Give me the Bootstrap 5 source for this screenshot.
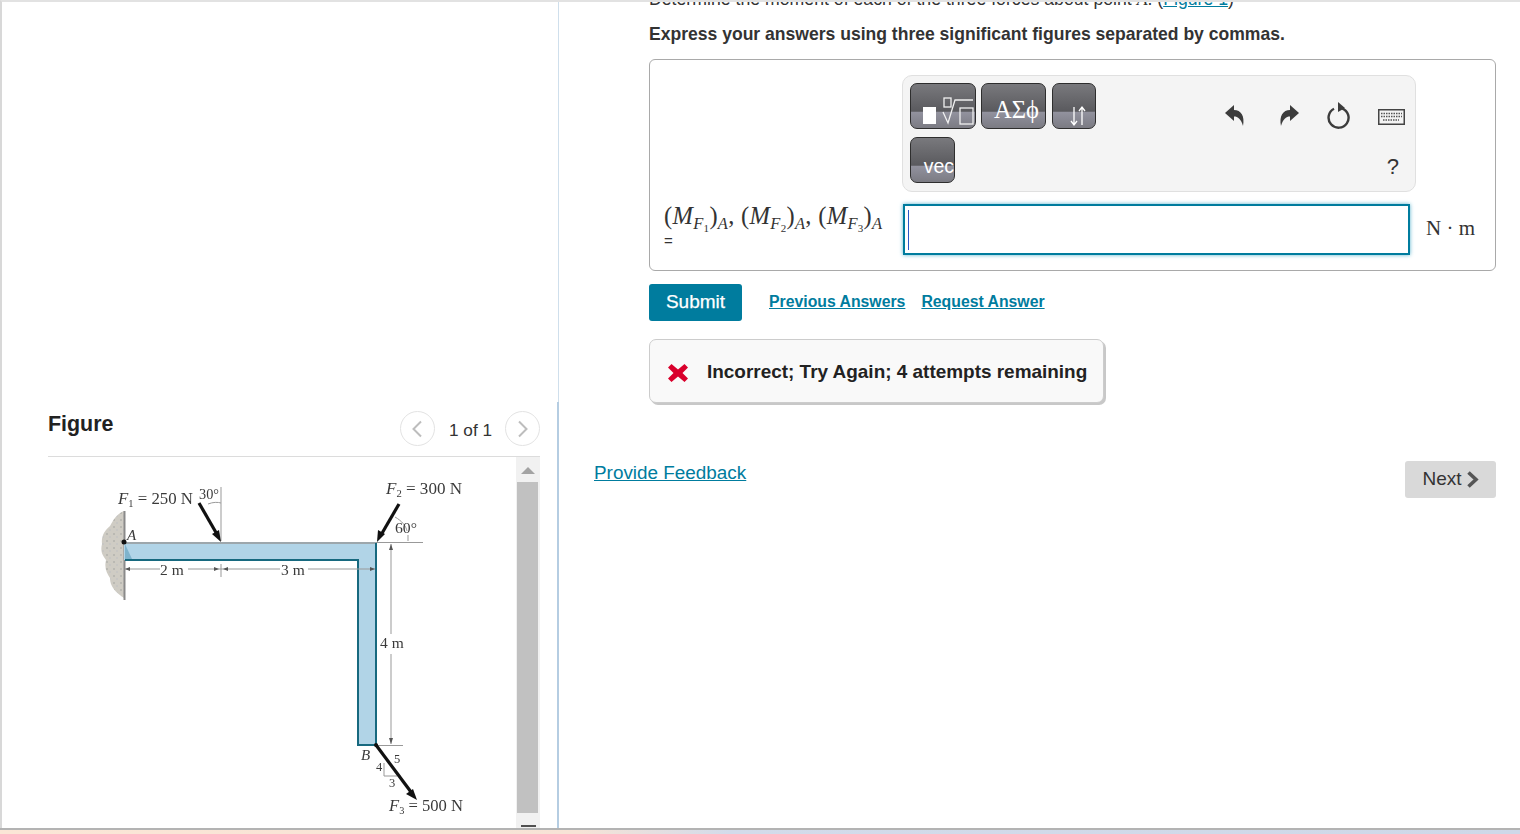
<!DOCTYPE html>
<html lang="en">
<head>
<meta charset="utf-8">
<title>Figure</title>
<link href="https://cdn.jsdelivr.net/npm/bootstrap@5.3.0/dist/css/bootstrap.min.css" rel="stylesheet">
<style>
html,body{height:834px;overflow:hidden;background:#fff}
body{font-family:"Liberation Sans",Arial,sans-serif;color:#333}
.shell{height:834px;display:flex;flex-direction:column}
.stage{flex:1 1 auto;min-height:0;display:flex;border-top:2px solid #e2e2e2;border-left:2px solid #d8d8d8;overflow:hidden}
.base-strip{flex:0 0 6px;border-top:2px solid #b3b3b3;background:linear-gradient(90deg,#fbe6d6 0,#f7e3d6 38%,#d3dbea 48%,#ced8e8 100%)}
.left-pane{flex:0 0 556px;display:flex;flex-direction:column;justify-content:flex-end;border-right:1px solid #cfdfec}
.fig-pane{height:426px;display:flex;flex-direction:column;padding-left:46px;border-right:2px solid #b5cde2;margin-right:-1px}
.fig-head{height:55px;flex:0 0 55px;margin-right:17px;border-bottom:1px solid #dcdcdc;display:flex;justify-content:space-between;align-items:flex-start}
.fig-title{font-size:21.4px;font-weight:700;color:#222;margin:9px 0 0;line-height:26px}
.pager{display:flex;align-items:center;gap:13px;margin-top:9px;font-size:17.2px;color:#333}
.pager span{padding:4px 0 0 1px}
.pager-dot{width:35px;height:35px;border:1px solid #e3e3e3;border-radius:50%;display:flex;align-items:center;justify-content:center;background:#fff;padding:0}
.fig-body{flex:1 1 auto;min-height:0;display:flex;margin-right:17px}
.fig-canvas{flex:0 0 468px;height:371px;overflow:hidden}
.fig-canvas svg{display:block;filter:blur(.45px)}
.fig-canvas text{font-family:"Liberation Serif",serif;fill:#3a3a3a}
.vbar{flex:0 0 24px;background:#f1f1f1;display:flex;flex-direction:column;align-items:flex-start;padding-left:1px;overflow:hidden}
.vbar-up{width:0;height:0;border-left:7px solid transparent;border-right:7px solid transparent;border-bottom:7px solid #a3a3a3;margin:10px 0 0 4px}
.vbar-thumb{width:21px;height:331px;background:#c1c1c1;margin-top:8px}
.vbar-down{width:15px;height:2px;background:#505050;margin:12px 0 0 4px}
.right-pane{flex:1 1 auto;min-width:0}
.q-block{padding:0 24px 0 90px}
.q-clip{font-size:17.7px;line-height:22px;margin:-14px 0 0;color:#333;white-space:nowrap}
.q-clip i{font-family:"Liberation Serif",serif}
.q-clip a,.act-link,.fb-link{color:#007c9e}
.q-bold{font-size:17.56px;font-weight:700;line-height:22px;margin:13px 0 0;color:#333;white-space:nowrap}
.ans-card{margin-top:14px;height:212px;border:1px solid #a9a9a9;border-radius:6px;padding:15px 0 0 252px;display:block;background:#fff}
.tool-box{width:514px;height:117px;background:#f4f4f4;border:1px solid #e0e0e0;border-radius:10px;display:flex;justify-content:space-between;padding:7px 10px 0 7px}
.tool-left{display:flex;flex-direction:column;gap:8px}
.tool-first{display:flex;gap:5px}
.tool-right{display:flex;flex-direction:column;align-items:flex-end}
.ico-row{display:flex;align-items:center;gap:28px;height:64px}
.ico-undo{margin-right:6px}
.ico-reset{margin-right:-1px}
.help-q{font-size:22px;line-height:26px;color:#333;margin:0 6px 0 0;padding-top:7px}
.mbtn{height:46px;border:1px solid #2e2e2e;border-radius:7px;padding:0;background:linear-gradient(180deg,#79797d 0,#5a5a5e 62%,#92929e 64%,#7b7b83 100%);color:#fff;display:flex;align-items:flex-end;justify-content:center;overflow:hidden}
.mb-a{width:66px}
.mb-b{width:65px;font-family:"Liberation Serif",serif;font-size:24.5px;line-height:35px;padding:0 0 1px 6px}
.mb-c{width:44px;margin-left:1px}
.mb-d{width:45px;font-family:"Liberation Sans",sans-serif;font-size:19.5px;line-height:32px;justify-content:flex-end}
.ans-row{display:flex;align-items:center;margin:11px 0 0 -238px}
.math-lab{flex:0 0 239px;font-family:"Liberation Serif",serif;font-size:24.5px;line-height:25px;color:#333;white-space:nowrap;padding-bottom:6px;letter-spacing:.3px}
.math-lab sub{font-size:16.5px;bottom:-.3em;line-height:0}
.math-lab sub sub{font-size:11px;font-style:normal}
.math-eq{display:block;font-family:"Liberation Sans",sans-serif;font-size:15px;line-height:16px;margin-top:5px}
.ans-input{width:507px;height:51px;border:2px solid #007c9e;box-shadow:0 0 4px #5ab3cd;background:#fff;padding:4px 0 0 3px}
.ans-input span{display:block;width:1px;height:40px;background:#2a56c6}
.unit-lab{font-family:"Liberation Serif",serif;font-size:21px;color:#333;margin-left:16px;white-space:nowrap}
.act-row{display:flex;align-items:center;margin-top:13px}
.btn-go{background:#007c9e;border:0;border-radius:3px;color:#fff;font-size:19px;width:93px;height:37px;padding:0;-webkit-text-stroke:.25px #fff}
.btn-go:hover{background:#007c9e;color:#fff}
.act-link{font-size:15.8px;font-weight:700;margin:0 0 2px 16px}
.act-first{margin-left:27px}
.msg-box{margin-top:18px;width:455px;height:64px;background:#f9f9f9;border:1px solid #ccc;border-radius:7px;box-shadow:2px 2px 0 #c8c8c8;display:flex;align-items:center;padding:3px 0 0 18px;gap:19px;font-size:18.95px;font-weight:700;color:#222;white-space:nowrap}
.fb-row{display:flex;justify-content:space-between;align-items:flex-start;padding:58px 24px 0 36px}
.fb-link{font-size:18.9px;line-height:24px;margin-left:-1px}
.btn-next{background:#d9d9d9;border:0;border-radius:3px;color:#333;font-size:19px;width:91px;height:37px;padding:0;display:flex;align-items:center;justify-content:center;gap:4px}
.btn-next:hover{background:#d9d9d9;color:#333}
</style>
</head>
<body>
<div class="shell">
  <div class="stage">
    <aside class="left-pane">
      <section class="fig-pane">
        <header class="fig-head">
          <h2 class="fig-title">Figure</h2>
          <div class="pager">
            <button class="pager-dot" type="button" aria-label="Previous"><svg width="12" height="18" viewBox="0 0 12 18"><path d="M10 1.500 2.500 9 10 16.500" fill="none" stroke="#bdbdbd" stroke-width="2"/></svg></button>
            <span>1 of 1</span>
            <button class="pager-dot" type="button" aria-label="Next"><svg width="12" height="18" viewBox="0 0 12 18"><path d="M2 1.500 9.500 9 2 16.500" fill="none" stroke="#bdbdbd" stroke-width="2"/></svg></button>
          </div>
        </header>
        <div class="fig-body">
          <div class="fig-canvas">
            <svg width="468" height="371" viewBox="48 457 468 371" role="img" aria-label="Bent beam with three forces">
              <defs>
                <pattern id="rock" width="7" height="7" patternUnits="userSpaceOnUse"><rect width="7" height="7" fill="#cfccc4"/><circle cx="2" cy="2" r="1" fill="#b3b3ae"/><circle cx="5" cy="5" r=".8" fill="#bdbfc2"/></pattern>
              </defs>
              <path d="M124 511C116 514 113 521 110 526C105 530 101 536 102 544C100 552 103 556 106 560C104 568 107 574 110 578C110 586 115 592 124 598Z" fill="url(#rock)"/>
              <path d="M124.500 511V600" stroke="#8a8a8a" stroke-width="2"/>
              <path d="M124 544H376V745H358V560H124Z" fill="#b1d4e7"/>
              <path d="M125 544L132 559H125Z" fill="#7fb3cc"/>
              <path d="M124 543H376" stroke="#7d8a90" stroke-width="1.500"/>
              <path d="M125 560H358V745H376V543" fill="none" stroke="#17697f" stroke-width="2"/>
              <circle cx="124" cy="542" r="2.500" fill="#111"/>
              <g stroke="#999" stroke-width="1" fill="none">
                <path d="M221 487V541M221 564V577"/>
                <path d="M125 569H160M188 569H280M308 569H375"/>
                <path d="M376 542.500H423M376 745.500H403"/>
                <path d="M391 544V634M391 654V744"/>
                <path d="M384 763V776H397"/>
                <path d="M395 517C402 521 406 526 407 531"/>
                <path d="M208 504C213 502 218 502 221 503"/>
                <path d="M408 535V541"/>
              </g>
              <path d="M125 569l5-2v4zM219 569l-5-2v4zM223 569l5-2v4zM375 569l-5-2v4zM391 544l-2 6h4zM391 744l-2-6h4z" fill="#555"/>
              <path d="M199 503 218 536" stroke="#111" stroke-width="3.200"/><path d="M221 542l-9-8 7-4z" fill="#111"/>
              <path d="M399 504 381 535" stroke="#111" stroke-width="3.200"/><path d="M377 542l1-12 7 4z" fill="#111"/>
              <path d="M376 745 411 792" stroke="#111" stroke-width="3.200"/><path d="M417 800l-11-6 7-5z" fill="#111"/>
              <circle cx="376" cy="745" r="2" fill="#111"/>
              <text x="118" y="504" font-size="16" textLength="75" lengthAdjust="spacingAndGlyphs"><tspan font-style="italic">F</tspan><tspan font-size="10" dy="3">1</tspan><tspan dy="-3"> = 250 N</tspan></text>
              <text x="199" y="499" font-size="15.500" textLength="20" lengthAdjust="spacingAndGlyphs">30°</text>
              <text x="127" y="540" font-size="15" font-style="italic">A</text>
              <text x="160" y="575" font-size="15.500">2 m</text>
              <text x="281" y="575" font-size="15.500">3 m</text>
              <text x="386" y="494" font-size="16" textLength="76" lengthAdjust="spacingAndGlyphs"><tspan font-style="italic">F</tspan><tspan font-size="10" dy="3">2</tspan><tspan dy="-3"> = 300 N</tspan></text>
              <text x="395" y="533" font-size="15.500" textLength="22" lengthAdjust="spacingAndGlyphs">60°</text>
              <text x="380" y="648" font-size="15.500">4 m</text>
              <text x="361" y="760" font-size="15" font-style="italic">B</text>
              <text x="394" y="763" font-size="12.500">5</text>
              <text x="376" y="771" font-size="12.500">4</text>
              <text x="389" y="787" font-size="12.500">3</text>
              <text x="389" y="811" font-size="16" textLength="74" lengthAdjust="spacingAndGlyphs"><tspan font-style="italic">F</tspan><tspan font-size="10" dy="3">3</tspan><tspan dy="-3"> = 500 N</tspan></text>
            </svg>
          </div>
          <div class="vbar"><span class="vbar-up"></span><span class="vbar-thumb"></span><span class="vbar-down"></span></div>
        </div>
      </section>
    </aside>
    <main class="right-pane">
      <div class="q-block">
        <p class="q-clip">Determine the moment of each of the three forces about point <i>A</i>. (<a href="#">Figure 1</a>)</p>
        <p class="q-bold">Express your answers using three significant figures separated by commas.</p>
        <div class="card ans-card">
          <div class="tool-box">
            <div class="tool-left">
              <div class="tool-first">
                <button type="button" class="btn mbtn mb-a" aria-label="Templates"><svg width="64" height="44" viewBox="0 0 64 44"><rect x="12" y="23" width="13" height="17" fill="#fff"/><g fill="none" stroke="#f0f0f0" stroke-width="1.300"><rect x="33" y="14" width="7" height="9"/><path d="M32 28l5 11 7-23h18"/><rect x="49" y="24" width="13" height="16"/></g></svg></button>
                <button type="button" class="btn mbtn mb-b">ΑΣϕ</button>
                <button type="button" class="btn mbtn mb-c" aria-label="Arrows"><svg width="42" height="44" viewBox="0 0 42 44"><path d="M21 23V41M18 37l3 4 3-4M29 41V23M26 27l3-4 3 4" fill="none" stroke="#fff" stroke-width="1.300"/></svg></button>
              </div>
              <div class="d-flex"><button type="button" class="btn mbtn mb-d">vec</button></div>
            </div>
            <div class="tool-right">
              <div class="ico-row">
                <svg class="ico-undo" width="20" height="23" viewBox="0 0 20 23" aria-label="Undo"><path d="M0 9 9 1V6C16 6 20 12 18 22 16 15 13 12.500 9 12.500V17Z" fill="#3c3c3c"/></svg>
                <svg width="20" height="23" viewBox="0 0 20 23" aria-label="Redo"><path d="M20 9 11 1V6C4 6 0 12 2 22 4 15 7 12.500 11 12.500V17Z" fill="#3c3c3c"/></svg>
                <svg class="ico-reset" width="24" height="27" viewBox="0 0 24 27" aria-label="Reset"><path d="M15 6.300A10 10 0 1 1 7 6.800" fill="none" stroke="#3c3c3c" stroke-width="2.400"/><path d="M11 0 18 6 11 10Z" fill="#3c3c3c"/></svg>
                <svg width="27" height="16" viewBox="0 0 27 16" aria-label="Keyboard" class="mt-1"><rect x=".75" y=".75" width="25.500" height="14.500" fill="#f4f4f4" stroke="#444" stroke-width="1.500"/><path d="M3 4.500H24M3 7.500H24M5 11H21" stroke="#555" stroke-width="1.500" stroke-dasharray="1.500 1"/></svg>
              </div>
              <p class="help-q">?</p>
            </div>
          </div>
          <div class="ans-row">
            <div class="math-lab">(<i>M<sub>F<sub>1</sub></sub></i>)<sub><i>A</i></sub>, (<i>M<sub>F<sub>2</sub></sub></i>)<sub><i>A</i></sub>, (<i>M<sub>F<sub>3</sub></sub></i>)<sub><i>A</i></sub><span class="math-eq">=</span></div>
            <div class="ans-input"><span></span></div>
            <div class="unit-lab">N · m</div>
          </div>
        </div>
        <div class="act-row">
          <button type="button" class="btn btn-go">Submit</button>
          <a href="#" class="act-link act-first">Previous Answers</a>
          <a href="#" class="act-link">Request Answer</a>
        </div>
        <div class="msg-box">
          <svg width="20" height="18" viewBox="0 0 20 18" aria-hidden="true"><path d="M0 3.500 3.500 0 10 5.500 16.500 0 20 3.500 14.500 9 20 14.500 16.500 18 10 12.500 3.500 18 0 14.500 5.500 9Z" fill="#d9002c"/></svg>
          <span>Incorrect; Try Again; 4 attempts remaining</span>
        </div>
      </div>
      <div class="fb-row">
        <a href="#" class="fb-link">Provide Feedback</a>
        <button type="button" class="btn btn-next">Next <svg width="13" height="17" viewBox="0 0 13 17" aria-hidden="true"><path d="M2.500 1.500 10 8.500 2.500 15.500" fill="none" stroke="#555" stroke-width="3.600"/></svg></button>
      </div>
    </main>
  </div>
  <div class="base-strip"></div>
</div>
<script src="https://cdn.jsdelivr.net/npm/bootstrap@5.3.0/dist/js/bootstrap.bundle.min.js"></script>
</body>
</html>
